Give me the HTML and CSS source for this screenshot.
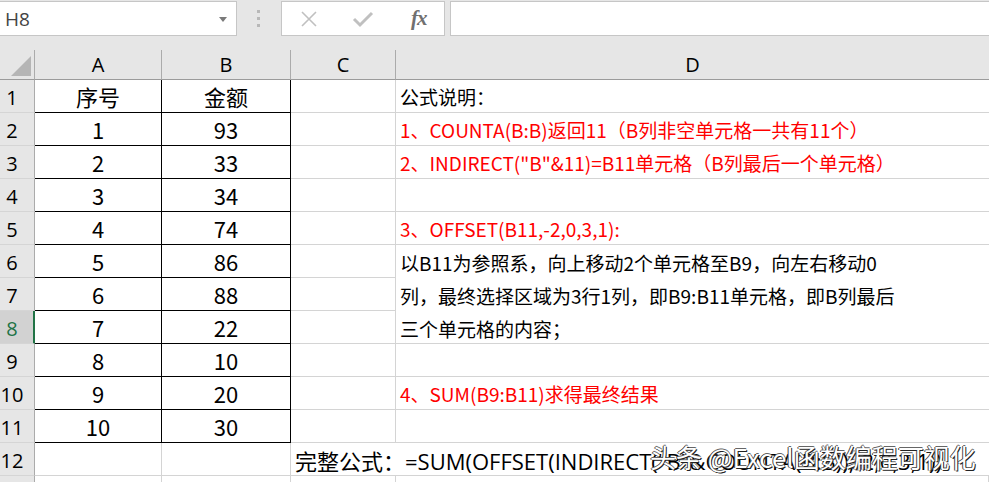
FILE: index.html
```html
<!DOCTYPE html>
<html>
<head>
<meta charset="utf-8">
<link rel="stylesheet" href="styles.css">
</head>
<body>
<div class="app">
  <div class="toolbar">
    <div class="namebox">
      <span class="cellref">H8</span>
      <svg class="dd" width="8" height="5" viewBox="0 0 8 5"><path d="M0 0H8L4 5Z" fill="#7a7a7a"/></svg>
    </div>
    <svg class="grip" width="4" height="18" viewBox="0 0 4 18"><rect x="0" y="0" width="3" height="3" fill="#b8b8b8"/><rect x="0" y="7" width="3" height="3" fill="#b8b8b8"/><rect x="0" y="14" width="3" height="3" fill="#b8b8b8"/></svg>
    <div class="fxbox">
      <svg class="ic-x" width="18" height="18" viewBox="0 0 18 18"><path d="M2 2L16 16M16 2L2 16" stroke="#c0c0c0" stroke-width="1.6" fill="none"/></svg>
      <svg class="ic-ok" width="22" height="18" viewBox="0 0 22 18"><path d="M2 9L8 15L20 3" stroke="#c0c0c0" stroke-width="3" fill="none"/></svg>
      <span class="fx">fx</span>
    </div>
    <div class="formula"></div>
  </div>
  <div class="sheet">
    <div class="corner"><svg width="20" height="20" viewBox="0 0 20 20"><path d="M20 0V20H0Z" fill="#b5b5b5"/></svg></div>
    <div class="ch">A</div><div class="ch">B</div><div class="ch">C</div><div class="ch last">D</div>

    <div class="rh">1</div><div class="c t">序号</div><div class="c t">金额</div><div class="c"></div><div class="c d">公式说明：</div>
    <div class="rh">2</div><div class="c t">1</div><div class="c t">93</div><div class="c"></div><div class="c d red">1、COUNTA(B:B)返回11（B列非空单元格一共有11个）</div>
    <div class="rh">3</div><div class="c t">2</div><div class="c t">33</div><div class="c"></div><div class="c d red">2、INDIRECT("B"&amp;11)=B11单元格（B列最后一个单元格）</div>
    <div class="rh">4</div><div class="c t">3</div><div class="c t">34</div><div class="c"></div><div class="c d"></div>
    <div class="rh">5</div><div class="c t">4</div><div class="c t">74</div><div class="c"></div><div class="c d red">3、OFFSET(B11,-2,0,3,1):</div>
    <div class="rh">6</div><div class="c t">5</div><div class="c t">86</div><div class="c"></div><div class="c d merged">以B11为参照系，向上移动2个单元格至B9，向左右移动0<br>列，最终选择区域为3行1列，即B9:B11单元格，即B列最后<br>三个单元格的内容；</div>
    <div class="rh">7</div><div class="c t">6</div><div class="c t">88</div><div class="c"></div>
    <div class="rh sel">8</div><div class="c t">7</div><div class="c t">22</div><div class="c"></div>
    <div class="rh">9</div><div class="c t">8</div><div class="c t">10</div><div class="c"></div><div class="c d"></div>
    <div class="rh">10</div><div class="c t">9</div><div class="c t">20</div><div class="c"></div><div class="c d red">4、SUM(B9:B11)求得最终结果</div>
    <div class="rh">11</div><div class="c t">10</div><div class="c t">30</div><div class="c"></div><div class="c d"></div>
    <div class="rh">12</div><div class="c"></div><div class="c"></div><div class="c span2">完整公式：=SUM(OFFSET(INDIRECT("B"&amp;COUNTA(B:B)),-2,0,3,1))</div>
    <div class="rh"></div><div class="c"></div><div class="c"></div><div class="c"></div><div class="c"></div>
    <div class="watermark">头条 @Excel函数编程可视化</div>
  </div>
</div>
</body>
</html>
```
FILE: styles.css
```css
html, body {
  margin: 0;
  padding: 0;
  background: #fff;
  overflow: hidden;
}
.app {
  width: 989px;
  height: 482px;
  overflow: hidden;
  font-family: "Noto Sans CJK SC", "Noto Sans", sans-serif;
}
.toolbar {
  height: 50px;
  background: #e6e6e6;
  display: flex;
  align-items: flex-start;
  box-sizing: border-box;
}
.namebox {
  margin-top: 1px;
  margin-left: -1px;
  width: 238px;
  height: 35px;
  background: #fff;
  border: 1px solid #c6c6c6;
  box-sizing: border-box;
  display: flex;
  align-items: center;
  justify-content: space-between;
  padding: 0 9px 0 5px;
}
.cellref {
  font-size: 19px;
  color: #444;
  font-family: "Open Sans", sans-serif;
}
.dd { margin-top: 1px; }
.grip {
  margin: 10px 0 0 20px;
}
.fxbox {
  margin: 1px 0 0 20px;
  width: 164px;
  height: 35px;
  background: #fff;
  border: 1px solid #c6c6c6;
  box-sizing: border-box;
  display: flex;
  align-items: center;
}
.ic-x { margin-left: 18px; }
.ic-ok { margin-left: 34px; }
.fx {
  margin-left: 37px;
  font-family: "Liberation Serif", serif;
  font-style: italic;
  font-weight: bold;
  font-size: 21px;
  color: #707070;
  letter-spacing: -1px;
}
.formula {
  margin: 1px 0 0 5px;
  flex: 1;
  height: 35px;
  background: #fff;
  border: 1px solid #c6c6c6;
  border-right: none;
  box-sizing: border-box;
}
.sheet {
  position: relative;
  display: grid;
  grid-template-columns: 35px 127px 129px 105px 593px;
  grid-template-rows: 30px repeat(12, 33px) 10px;
}
.corner {
  background: #e6e6e6;
  border-right: 1px solid #ababab;
  border-bottom: 1px solid #9b9b9b;
  box-sizing: border-box;
  display: flex;
  align-items: flex-end;
  justify-content: flex-end;
  padding: 0 3px 3px 0;
}
.ch {
  background: #e6e6e6;
  border-right: 1px solid #ababab;
  border-bottom: 1px solid #9b9b9b;
  box-sizing: border-box;
  font-size: 20px;
  text-align: center;
  line-height: 30px;
  color: #000;
  font-family: "Open Sans", sans-serif;
}
.ch.last { border-right: none; }
.rh {
  background: #e6e6e6;
  border-right: 1px solid #ababab;
  border-bottom: 1px solid #d5d5d5;
  box-sizing: border-box;
  font-size: 20px;
  line-height: 36px;
  padding-right: 10px;
  text-align: center;
  color: #000;
  font-family: "Open Sans", sans-serif;
}
.rh.sel {
  background: #d2d2d2;
  color: #217346;
  border-right: 2px solid #217346;
  padding-right: 9px;
}
.c {
  border-right: 1px solid #d4d4d4;
  border-bottom: 1px solid #d4d4d4;
  box-sizing: border-box;
  font-size: 19px;
  line-height: 34px;
  white-space: nowrap;
  color: #000;
}
.c.t {
  font-size: 22px;
  text-align: center;
  border-right: 1px solid #000;
  border-bottom: 1px solid #000;
  line-height: 32px;
}
.c.d {
  padding-left: 4px;
  border-right: none;
}
.red { color: #ff0000; }
.merged {
  grid-row: span 3;
  line-height: 33px;
  padding-top: 1px;
}
.span2 {
  grid-column: span 2;
  padding-left: 4px;
  font-family: "Open Sans", "Noto Sans CJK SC", sans-serif;
  font-size: 22px;
  line-height: 36px;
  overflow: visible;
  border-right: none;
}
.watermark {
  position: absolute;
  left: 650px;
  top: 392px;
  font-size: 26px;
  line-height: 30px;
  color: #fff;
  white-space: nowrap;
  text-shadow: 1px 1px 0 #222, -1px 0 0 #444, 0 -1px 0 #666;
}
```
